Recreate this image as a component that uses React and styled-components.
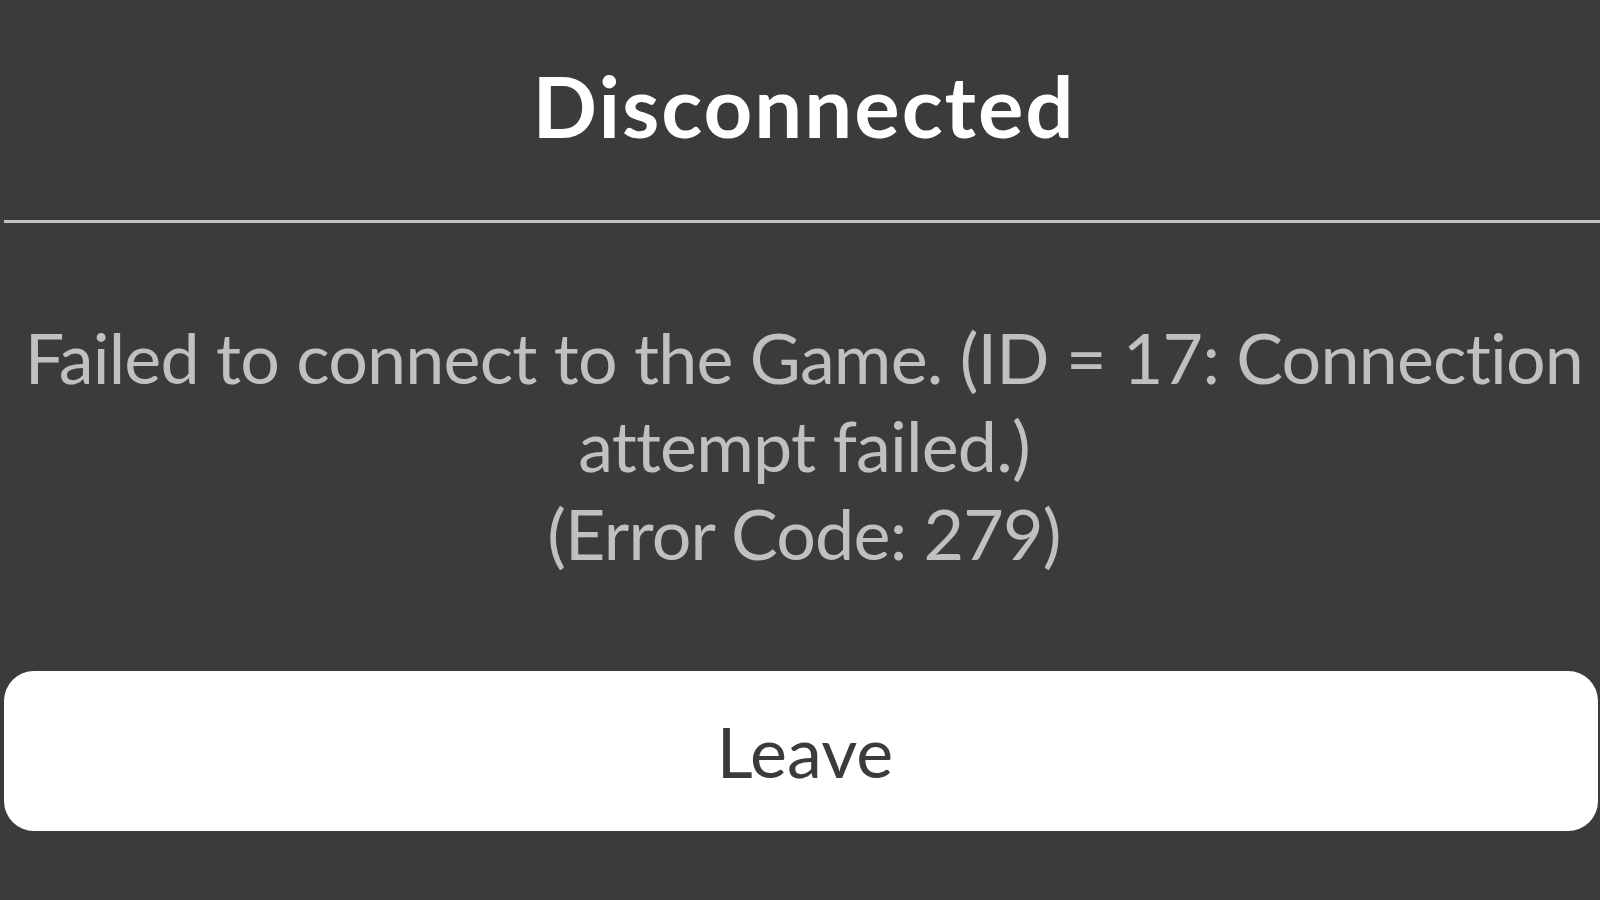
import React from 'react';
import styled, { createGlobalStyle } from 'styled-components';

const GlobalStyle = createGlobalStyle`
  html, body {
    margin: 0;
    padding: 0;
    background: #393b3d;
  }
  body {
    font-family: Lato, "Liberation Sans", sans-serif;
  }
`;

const Prompt = styled.div`
  width: 1600px;
  height: 900px;
  background: #393b3d;
  display: flex;
  flex-direction: column;
  box-sizing: border-box;
  overflow: hidden;
`;

const Header = styled.div`
  height: 220px;
  box-sizing: border-box;
  padding: 54px 0 0 8px;
  text-align: center;
`;

const Title = styled.h1`
  margin: 0;
  font-size: 85px;
  line-height: 1.2;
  font-weight: 700;
  letter-spacing: 2px;
  color: #ffffff;
`;

const Divider = styled.div`
  height: 3px;
  margin-left: 4px;
  background: #c2c2c2;
`;

const Message = styled.p`
  margin: 90px 0 0;
  padding-left: 8px;
  font-size: 70px;
  line-height: 88px;
  letter-spacing: -0.8px;
  color: #c0c0c0;
  text-align: center;
  white-space: pre-line;
`;

const LeaveButton = styled.button`
  margin: 94px 2px 0 4px;
  height: 160px;
  border: none;
  border-radius: 30px;
  background: #ffffff;
  color: #393b3d;
  font-family: Lato, "Liberation Sans", sans-serif;
  font-size: 70px;
  padding: 0 0 0 8px;
  cursor: pointer;
`;

export default function App() {
  return (
    <>
      <GlobalStyle />
      <Prompt>
        <Header>
          <Title>Disconnected</Title>
        </Header>
        <Divider />
        <Message>
          {'Failed to connect to the Game. (ID = 17: Connection attempt failed.)\n(Error Code: 279)'}
        </Message>
        <LeaveButton type="button">Leave</LeaveButton>
      </Prompt>
    </>
  );
}
